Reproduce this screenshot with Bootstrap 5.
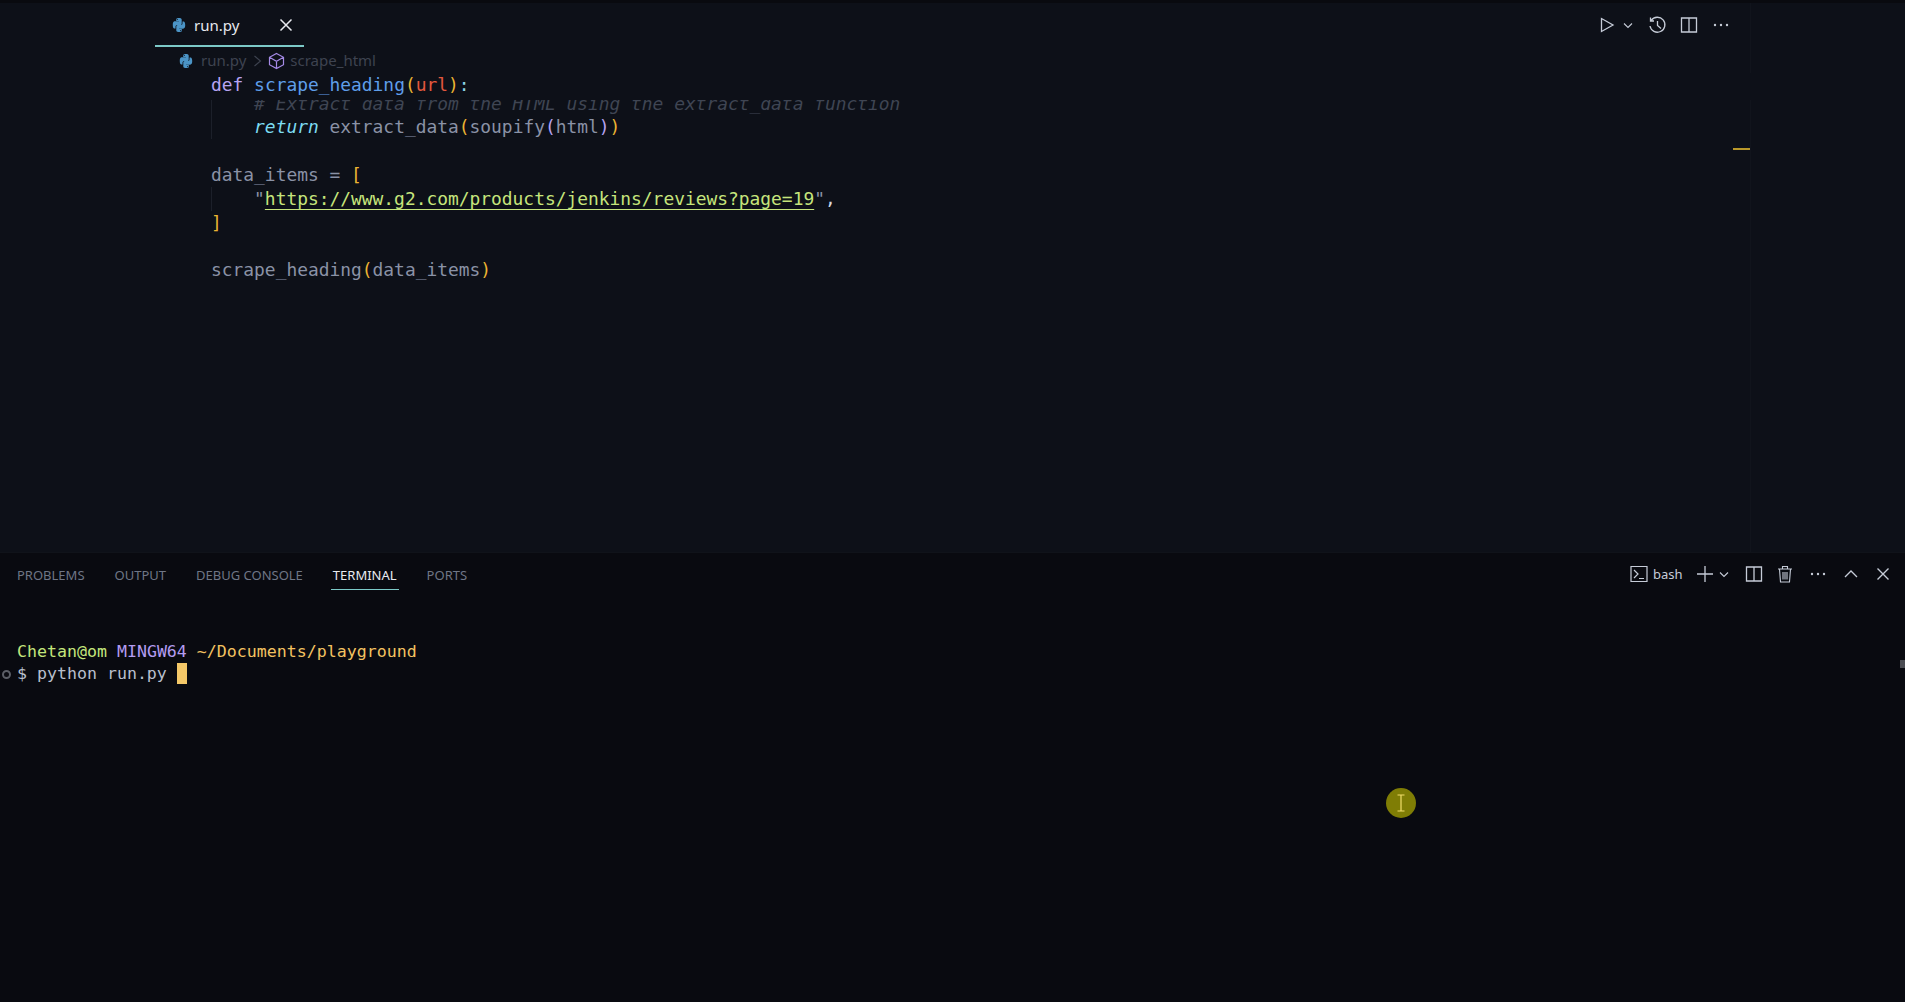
<!DOCTYPE html>
<html lang="en">
<head>
<meta charset="utf-8">
<title>run.py</title>
<link href="https://cdn.jsdelivr.net/npm/bootstrap@5.3.0/dist/css/bootstrap.min.css" rel="stylesheet">
<style>
html,body{height:100%;background:#090a10;overflow:hidden}
.ide{height:1002px;position:relative;font-family:"Noto Sans","Open Sans",sans-serif}
.ed-pane{height:552px;background:#0d1018;border-top:3px solid #090a0f;position:relative}
.tab-row{height:44px;padding-left:155px}
.ed-tab{width:149px;height:44px;border-bottom:2px solid #7cc9c7;color:#e6e8ee;font-size:15px;padding-left:17px;padding-top:2px}
.ed-tab .tab-name{margin-left:8px;width:85px}
.crumbs{height:26px;padding-left:179px;color:#3e4350;font-size:15px;gap:0;padding-top:1px}
.crumbs .c1{margin-left:8px;margin-right:7px}
.crumbs .c2{margin:0 5px 0 6px}
.code{font-family:"DejaVu Sans Mono","Liberation Mono",monospace;font-size:17.9px;color:#8a92a6}
.cl{height:23.85px;line-height:23.85px;padding-left:211px;white-space:pre}
.sticky{height:27px;line-height:24px;position:relative;z-index:1;background:#0d1018}
.clip{margin-top:-8.500px}
.guide{padding-left:0;margin-left:211px;box-shadow:inset 1px 0 0 #1c202a}
.kw{color:#b7a3f2}.fn{color:#5f9ee9}.par{color:#e2583e}.br{color:#ecb433}.pun{color:#8ad4e4}
.cm{color:#3f4553;font-style:italic}.ret{color:#7cdcf2;font-style:italic}
.str{color:#c6e57c;text-decoration:underline;text-underline-offset:4px;text-decoration-thickness:1px}
.com{color:#d5d9e2}
.act{position:absolute;top:12px;right:175px;gap:0;color:#c6ccd8}
.ruler-mark{position:absolute;left:1733px;top:145px;width:17px;height:2px;background:#b9982a}
.min-edge{position:absolute;left:1750px;top:0;bottom:0;width:1px;background:#11141c}
.panel-pane{height:450px;background:#090a10;border-top:1px solid #10131a;position:relative}
.p-tabs{height:45px;padding-left:17px;color:#6f7686;font-size:13px}
.p-tab{height:26px;line-height:22px;margin-right:30px;margin-top:3px;white-space:nowrap}
.p-tab.on{color:#e8eaf0;border-bottom:1px solid #7cc9c7;margin-right:28px;padding:0 2px;margin-left:-2px}
.p-act{position:absolute;top:9px;right:0;color:#c6ccd8;font-size:13px;width:275px;height:24px}
.p-act svg{flex:none}
.p-act .bash-name{margin-left:5px;padding-top:2px}
.term{font-family:"DejaVu Sans Mono","Liberation Mono",monospace;font-size:16.6px;line-height:22px;color:#b8bfcc;padding-top:43px;padding-left:17px;white-space:pre}
.t-g{color:#c4e67c}.t-p{color:#b49cf0}.t-y{color:#f3c261}
.caret{display:inline-block;width:10px;height:21px;background:#f4c868;vertical-align:-5px}
.t-dot{position:absolute;left:2px;top:117px;width:9px;height:9px;border:2px solid #5b5e66;border-radius:50%}
.t-scroll{position:absolute;right:0;top:107px;width:5px;height:8px;background:#4a4c52}
.mouse{position:absolute;left:1386px;top:788px;width:30px;height:30px;border-radius:50%;background:#7f7d05}
</style>
</head>
<body>
<div class="ide">
  <div class="ed-pane">
    <div class="tab-row d-flex">
      <div class="ed-tab d-flex align-items-center">
        <svg width="14" height="14" viewBox="0 0 16 16"><path fill="#4b94c6" d="M7.900 0C4.600 0 4.800 1.500 4.800 1.500V3.300H8v.5H3.100S.9 3.600.9 7.900s1.900 4.100 1.900 4.100H4V10s-.1-2 2-2h3.200s1.900 0 1.900-1.800V2.100S11.400 0 7.900 0zM6.100 1.100a.6.6 0 1 1 0 1.200.6.6 0 0 1 0-1.200z"/><path fill="#4b94c6" d="M8.100 16c3.300 0 3.100-1.500 3.100-1.500v-1.800H8v-.5h4.900s2.200.2 2.200-4.100-1.900-4.100-1.900-4.100H12V6s.1 2-2 2H6.800s-1.900 0-1.900 1.800v4.100S4.600 16 8.100 16zm1.800-1.100a.6.6 0 1 1 0-1.200.6.6 0 0 1 0 1.200z"/></svg>
        <span class="tab-name">run.py</span>
        <svg width="14" height="14" viewBox="0 0 14 14"><path d="M1.500 1.500l11 11M12.500 1.500l-11 11" stroke="#e8eaf0" stroke-width="1.500" fill="none"/></svg>
      </div>
    </div>
    <div class="crumbs d-flex align-items-center">
      <svg width="14" height="14" viewBox="0 0 16 16"><path fill="#4b94c6" d="M7.900 0C4.600 0 4.800 1.500 4.800 1.500V3.300H8v.5H3.100S.9 3.600.9 7.900s1.900 4.100 1.900 4.100H4V10s-.1-2 2-2h3.200s1.900 0 1.900-1.800V2.100S11.400 0 7.900 0zM6.100 1.100a.6.6 0 1 1 0 1.200.6.6 0 0 1 0-1.200z"/><path fill="#4b94c6" d="M8.100 16c3.300 0 3.100-1.500 3.100-1.500v-1.800H8v-.5h4.900s2.200.2 2.200-4.100-1.900-4.100-1.900-4.100H12V6s.1 2-2 2H6.800s-1.900 0-1.900 1.800v4.100S4.600 16 8.100 16zm1.800-1.100a.6.6 0 1 1 0-1.200.6.6 0 0 1 0 1.200z"/></svg>
      <span class="c1">run.py</span>
      <svg width="9" height="14" viewBox="0 0 9 14"><path d="M1.500 2l6 5-6 5" stroke="#3e4350" stroke-width="1.100" fill="none"/></svg>
      <svg class="c2" width="17" height="18" viewBox="0 0 17 18"><path d="M8.500 1.500l7 3.800v7.400l-7 3.800-7-3.800V5.300zM1.500 5.300l7 3.900 7-3.900M8.500 9.200v7.300" stroke="#a58ae6" stroke-width="1.200" fill="none"/></svg>
      <span>scrape_html</span>
    </div>
    <div class="code">
      <div class="cl sticky"><span class="kw">def</span> <span class="fn">scrape_heading</span><span class="br">(</span><span class="par">url</span><span class="br">)</span><span class="pun">:</span></div>
      <div class="cl clip guide"><span class="cm">    # Extract data from the HTML using the extract_data function</span></div>
      <div class="cl guide">    <span class="ret">return</span> extract_data<span class="br">(</span>soupify<span class="kw">(</span>html<span class="kw">)</span><span class="br">)</span></div>
      <div class="cl"> </div>
      <div class="cl">data_items = <span class="br">[</span></div>
      <div class="cl guide">    "<span class="str">https://www.g2.com/products/jenkins/reviews?page=19</span>"<span class="com">,</span></div>
      <div class="cl"><span class="br">]</span></div>
      <div class="cl"> </div>
      <div class="cl">scrape_heading<span class="br">(</span>data_items<span class="br">)</span></div>
    </div>
    <div class="min-edge"></div>
    <div class="ruler-mark"></div>
    <div class="act d-flex align-items-center">
      <svg width="18" height="18" viewBox="0 0 18 18" style="margin-right:1px"><path d="M3.500 2.500v13L15 9z" stroke="#c6ccd8" stroke-width="1.300" fill="none"/></svg>
      <svg class="ms-1" width="14" height="14" viewBox="0 0 14 14" style="margin-right:12px"><path d="M3 5.500l4 4 4-4" stroke="#c6ccd8" stroke-width="1.100" fill="none"/></svg>
      <svg width="20" height="20" viewBox="0 0 20 20" style="margin-right:13px"><path d="M4.200 5.500A7.500 7.500 0 1 1 3 11M3.500 2.500v3.500H7M10.500 6v4.500l3.500 3" stroke="#c6ccd8" stroke-width="1.300" fill="none"/></svg>
      <svg width="18" height="18" viewBox="0 0 18 18" style="margin-right:14px"><path d="M1.500 2h15v14h-15zM9 2v14" stroke="#c6ccd8" stroke-width="1.300" fill="none"/></svg>
      <svg width="18" height="18" viewBox="0 0 18 18"><circle cx="3" cy="9" r="1.200" fill="#c6ccd8"/><circle cx="9" cy="9" r="1.200" fill="#c6ccd8"/><circle cx="15" cy="9" r="1.200" fill="#c6ccd8"/></svg>
    </div>
  </div>
  <div class="panel-pane">
    <div class="p-tabs d-flex align-items-center">
      <div class="p-tab">PROBLEMS</div>
      <div class="p-tab">OUTPUT</div>
      <div class="p-tab">DEBUG CONSOLE</div>
      <div class="p-tab on">TERMINAL</div>
      <div class="p-tab">PORTS</div>
    </div>
    <div class="p-act d-flex align-items-center">
      <svg width="18" height="18" viewBox="0 0 18 18"><path d="M1 1.500h16v15H1zM4 5l4 4-4 4M9 13.500h5" stroke="#c6ccd8" stroke-width="1.200" fill="none"/></svg>
      <span class="bash-name">bash</span>
      <svg width="18" height="18" viewBox="0 0 18 18" style="margin-left:13px"><path d="M9 1v16M1 9h16" stroke="#c6ccd8" stroke-width="1.300" fill="none"/></svg>
      <svg width="12" height="12" viewBox="0 0 12 12" style="margin-left:4px"><path d="M2 4.500l4 4 4-4" stroke="#c6ccd8" stroke-width="1.100" fill="none"/></svg>
      <svg width="18" height="18" viewBox="0 0 18 18" style="margin-left:15px"><path d="M1.500 2h15v14h-15zM9 2v14" stroke="#c6ccd8" stroke-width="1.300" fill="none"/></svg>
      <svg width="16" height="18" viewBox="0 0 16 18" style="margin-left:14px"><path d="M1 4h14M5.500 4V1.500h5V4M2.500 4l1 13h9l1-13M6 7v7.500M8 7v7.500M10 7v7.500" stroke="#c6ccd8" stroke-width="1.100" fill="none"/></svg>
      <svg width="18" height="18" viewBox="0 0 18 18" style="margin-left:16px"><circle cx="3" cy="9" r="1.200" fill="#c6ccd8"/><circle cx="9" cy="9" r="1.200" fill="#c6ccd8"/><circle cx="15" cy="9" r="1.200" fill="#c6ccd8"/></svg>
      <svg width="16" height="16" viewBox="0 0 16 16" style="margin-left:16px"><path d="M2 11l6-6 6 6" stroke="#c6ccd8" stroke-width="1.300" fill="none"/></svg>
      <svg width="14" height="14" viewBox="0 0 14 14" style="margin-left:17px"><path d="M1.500 1.500l11 11M12.500 1.500l-11 11" stroke="#c6ccd8" stroke-width="1.400" fill="none"/></svg>
    </div>
    <div class="term"><div><span class="t-g">Chetan@om</span> <span class="t-p">MINGW64</span> <span class="t-y">~/Documents/playground</span></div><div>$ python run.py <span class="caret"></span></div></div>
    <div class="t-dot"></div>
    <div class="t-scroll"></div>
  </div>
  <div class="mouse d-flex align-items-center justify-content-center">
    <svg width="10" height="18" viewBox="0 0 10 18"><path d="M1.500 1h7M1.500 17h7M5 1v16" stroke="#f1de6a" stroke-width="1.200" fill="none"/></svg>
  </div>
</div>
<script src="https://cdn.jsdelivr.net/npm/bootstrap@5.3.0/dist/js/bootstrap.bundle.min.js"></script>
</body>
</html>
